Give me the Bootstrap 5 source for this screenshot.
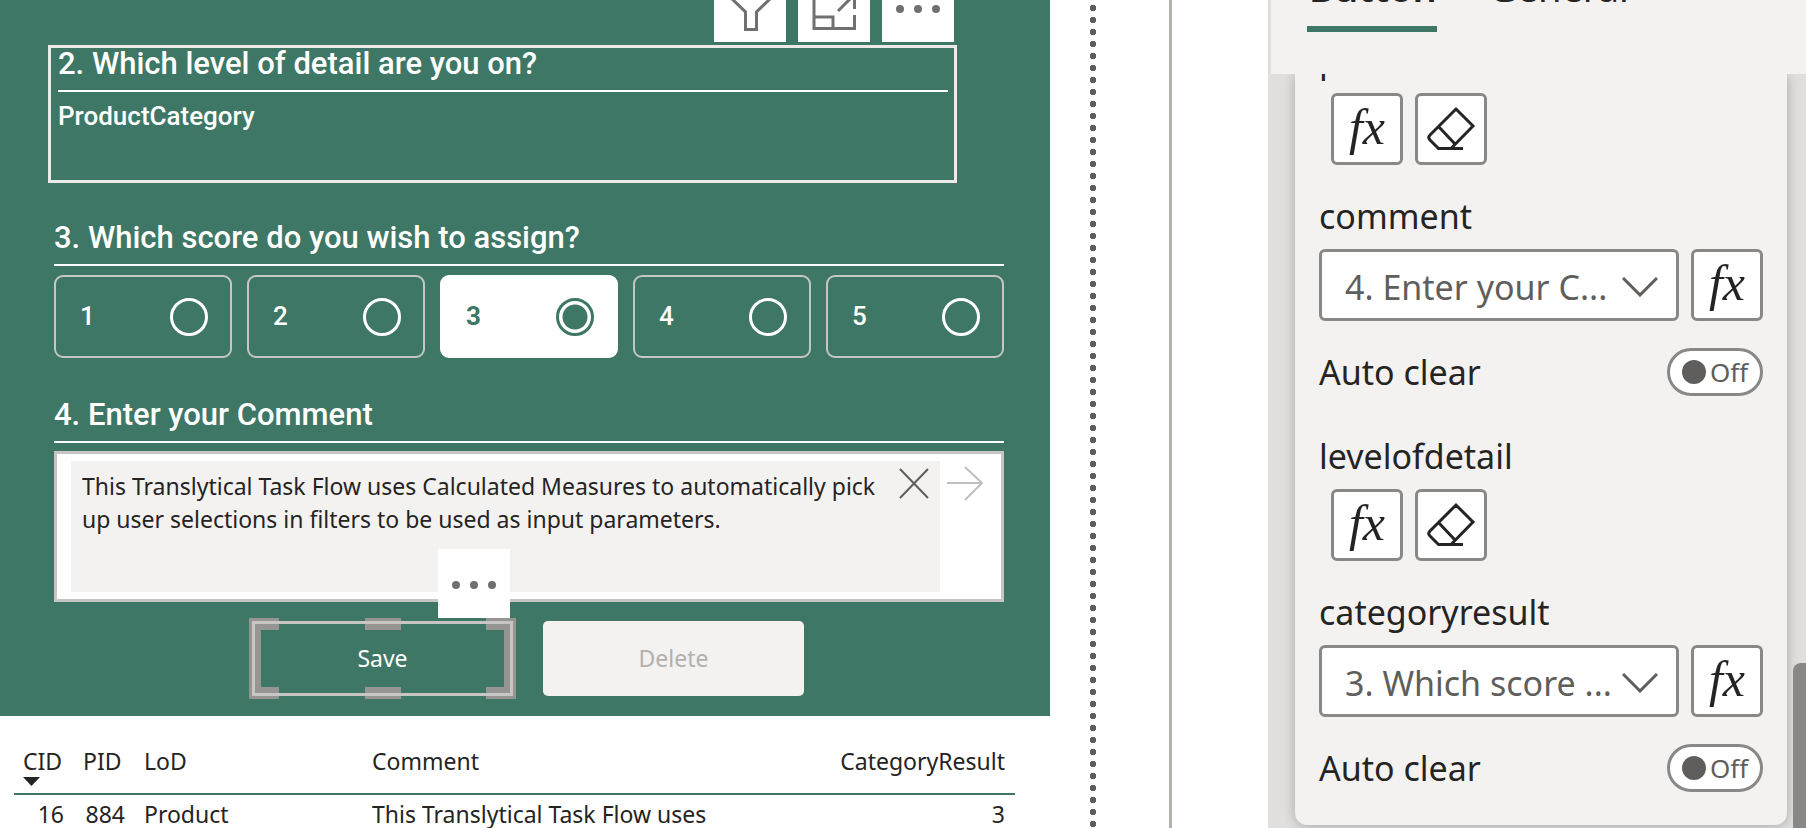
<!DOCTYPE html>
<html lang="en">
<head>
<meta charset="utf-8">
<meta name="viewport" content="width=device-width, initial-scale=1">
<title>Report editor</title>
<link href="https://cdn.jsdelivr.net/npm/bootstrap@5.3.0/dist/css/bootstrap.min.css" rel="stylesheet">
<style>
:root{--brand:#3e7765;--ink:#252423;--soft:#605e5c;--edge:#8a8886;--pale:#f3f2f1;--mid:#c8c6c4}
body{font-family:"Noto Sans","Open Sans",sans-serif;color:var(--ink);font-size:24px;line-height:33px;background:#fff}
button{font:inherit;color:inherit;padding:0;border:0}
svg{display:block}
/* report canvas */
.form-panel{background:var(--brand);color:#fff;font-family:Roboto,sans-serif;height:716px}
.visual-tools{height:42px;gap:12px;margin-right:96px}
.tool{width:72px;height:72px;background:#fff;color:#707070;flex:none}
.level-box{margin:3px 93px 0 48px;border:3px solid #edebe9;height:138px;padding:0 6px 0 7px}
.q-title{font-size:31px;line-height:31px;font-weight:500;margin:0;padding-bottom:11px;border-bottom:2px solid #fff}
.level-value{font-size:26px;line-height:32px;font-weight:500;padding-top:8px}
.question{margin:0 46px 0 54px}
.q-score{margin-top:39px}
.choices{gap:15px;margin-top:9px}
.choice{flex:1 1 0;height:83px;border:2px solid var(--mid);border-radius:9px;padding:0 22px 0 24px;font-size:26px;font-weight:500;cursor:pointer}
.choice input{appearance:none;width:38px;height:38px;border:3px solid #fff;border-radius:50%;margin:0}
.choice.chosen{background:#fff;border-color:#fff;color:var(--brand);font-weight:700}
.choice input:checked{border-color:var(--brand);background:radial-gradient(circle,var(--brand) 12px,#fff 13px)}
.q-comment{margin-top:41px}
.comment-box{margin-top:8px;height:151px;border:3px solid var(--mid);background:#fff;padding:7px 14px}
.comment-field{background:var(--pale);height:131px;flex:1 1 auto;padding:5px 9px 0 11px;margin-right:5px}
.comment-field textarea{flex:1 1 auto;resize:none;border:0;background:none;padding:4px 0 0;height:100px;font:23px/33px "Noto Sans",sans-serif;color:var(--ink);outline:0;overflow:hidden}
.actions{gap:27px;margin-top:16px;margin-left:249px;font-family:"Noto Sans",sans-serif}
.action-btn{height:75px;width:261px;font-size:23px}
.selection{width:267px;height:81px;position:relative}
.selection .frame{position:absolute;inset:0;width:100%;height:100%}
.selection .action-btn{position:absolute;inset:3px;background:none;color:#fff}
.selection .more{position:absolute;right:6px;bottom:100%;height:69px;width:72px;background:#fff;color:#707070}
.delete-btn{background:var(--pale);color:#b3b0ad;border-radius:5px}
.data-table{width:calc(100% - 49px);margin:24px 35px 0 14px;font-size:23px;table-layout:fixed}
.data-table th{font-weight:400;vertical-align:top;height:54px;padding:5px 10px 0 9px;border-bottom:2px solid var(--brand);white-space:nowrap}
.data-table td{padding:3px 10px 0 9px;white-space:nowrap}
.data-table .num{text-align:right}
.sort{width:17px;height:9px;margin-top:-1px}
/* page edges */
.page-dots{width:6px;margin-left:40px;background:radial-gradient(circle at 3px 3px,#605e5c 2px,#605e5c 3px,transparent 3px) 0 5px/6px 12px}
.page-rule{width:3px;margin:0 96px 0 73px;background:#b3b0ad}
/* format pane */
.format-pane{width:538px;flex:none;background:#e1dfdd;border-left:3px solid #e1dfdd;font-size:34px;line-height:48px}
.tab-head{background:var(--pale);height:74px;padding-left:36px;gap:50px;position:relative;z-index:1;font-size:38px}
.tab-link{color:var(--ink);text-decoration:none;height:69px;margin-top:-37px;padding-left:2px}
.tab-link.active{font-weight:600;border-bottom:6px solid var(--brand)}
.settings{display:flow-root;margin:0 19px 3px 24px;height:751px;background:var(--pale);border-radius:0 0 12px 12px;padding:0 24px;box-shadow:0 1px 12px rgba(0,0,0,.25)}
.param{height:396px;padding-top:4px}
.param-first{margin-top:-42px}
.param-name{display:block;height:48px}
.icon-row{gap:12px;padding-left:12px;margin-top:9px}
.mid-name{margin-top:27px}
.pick-row{gap:12px;margin-top:9px}
.clear-row{margin-top:27px}
.sq{width:72px;height:72px;flex:none;background:#fff;border:3px solid var(--edge);border-radius:6px}
.fx-btn{font:italic 50px/60px "Liberation Serif",serif;padding:0 0 4px}
.pick{appearance:none;height:72px;flex:1 1 auto;min-width:0;border:3px solid var(--edge);border-radius:6px;color:var(--soft);font-size:34px;padding:4px 60px 0 23px;background:#fff url("data:image/svg+xml,%3Csvg xmlns='http://www.w3.org/2000/svg' width='36' height='20'%3E%3Cpath d='M1 1L18 18L35 1' fill='none' stroke='%23605e5c' stroke-width='3'/%3E%3C/svg%3E") no-repeat right 18px top 25px}
.switch{width:96px;height:48px;border:3px solid var(--edge);border-radius:24px;background:#fff;color:var(--soft);font-size:26px;line-height:42px;gap:4px;padding-left:12px}
.switch input{appearance:none;width:24px;height:24px;border-radius:50%;background:var(--soft);margin:0;flex:none}
.scroll-thumb{position:absolute;right:0;top:663px;bottom:0;width:13px;background:var(--edge);border-radius:8px 0 0 0}
</style>
</head>
<body class="vh-100 overflow-hidden">
<div class="d-flex h-100 overflow-hidden position-relative">
  <main class="flex-grow-1 overflow-hidden">
    <section class="form-panel">
      <div class="visual-tools d-flex justify-content-end align-items-end overflow-hidden">
        <button class="tool" aria-label="Filters"><svg width="72" height="72" fill="none" stroke="currentColor" stroke-width="3"><path d="M14 25H60L42.500 42V59.500H31.500V42Z"/></svg></button>
        <button class="tool" aria-label="Focus mode"><svg width="72" height="72" fill="none" stroke="currentColor" stroke-width="3"><path d="M30 24H16V58.500H56.500V45M16 47H35V58.500M40 41L56 25M44 24H56.500V39"/></svg></button>
        <button class="tool" aria-label="More options"><svg width="72" height="72" fill="currentColor"><circle cx="18" cy="39" r="4"/><circle cx="36" cy="39" r="4"/><circle cx="54" cy="39" r="4"/></svg></button>
      </div>
      <div class="level-box">
        <h2 class="q-title">2. Which level of detail are you on?</h2>
        <div class="level-value">ProductCategory</div>
      </div>
      <div class="question q-score" role="radiogroup" aria-labelledby="score-title">
        <h2 class="q-title" id="score-title">3. Which score do you wish to assign?</h2>
        <div class="choices d-flex">
          <label class="choice d-flex align-items-center justify-content-between">1<input type="radio" name="score"></label>
          <label class="choice d-flex align-items-center justify-content-between">2<input type="radio" name="score"></label>
          <label class="choice chosen d-flex align-items-center justify-content-between">3<input type="radio" name="score" checked></label>
          <label class="choice d-flex align-items-center justify-content-between">4<input type="radio" name="score"></label>
          <label class="choice d-flex align-items-center justify-content-between">5<input type="radio" name="score"></label>
        </div>
      </div>
      <div class="question q-comment">
        <h2 class="q-title"><label for="note">4. Enter your Comment</label></h2>
        <div class="comment-box d-flex align-items-start">
          <div class="comment-field d-flex align-items-start">
            <textarea id="note">This Translytical Task Flow uses Calculated Measures to automatically pick up user selections in filters to be used as input parameters.</textarea>
            <button class="bg-transparent" aria-label="Clear"><svg width="32" height="34" fill="none" stroke="#605e5c" stroke-width="2"><path d="M1 3L29 32M29 3L1 32"/></svg></button>
          </div>
          <button class="bg-transparent" aria-label="Submit"><svg width="42" height="46" fill="none" stroke="#c0bfbe" stroke-width="2"><path d="M2 22H37M20 6L37 22L20 39"/></svg></button>
        </div>
      </div>
      <div class="actions d-flex align-items-center">
        <div class="selection">
          <svg class="frame" viewBox="0 0 267 81"><path fill="#979593" d="M0 0H30V12H12V69H30V81H0ZM267 0H237V12H255V69H237V81H267ZM116 0H152V12H116ZM116 69H152V81H116Z"/><path fill="none" stroke="#c8c6c4" stroke-width="3" d="M4.500 4.500H262.500V76.500H4.500Z"/></svg>
          <button class="action-btn">Save</button>
          <button class="more" aria-label="More options"><svg width="72" height="69" fill="currentColor"><circle cx="18" cy="36" r="4"/><circle cx="36" cy="36" r="4"/><circle cx="54" cy="36" r="4"/></svg></button>
        </div>
        <button class="action-btn delete-btn">Delete</button>
      </div>
    </section>
    <table class="data-table">
      <colgroup><col style="width:60px"><col style="width:61px"><col style="width:228px"><col><col style="width:190px"></colgroup>
      <thead><tr><th>CID<svg class="sort"><path d="M0 0H17L8.500 9Z" fill="#252423"/></svg></th><th>PID</th><th>LoD</th><th>Comment</th><th class="num">CategoryResult</th></tr></thead>
      <tbody><tr><td class="num">16</td><td class="num">884</td><td>Product</td><td>This Translytical Task Flow uses</td><td class="num">3</td></tr></tbody>
    </table>
  </main>
  <div class="page-dots flex-shrink-0"></div>
  <div class="page-rule flex-shrink-0"></div>
  <aside class="format-pane">
    <nav class="tab-head d-flex align-items-start">
      <a class="tab-link active" href="#">Button</a>
      <a class="tab-link" href="#">General</a>
    </nav>
    <div class="settings">
      <div class="param param-first">
        <span class="param-name">pid</span>
        <div class="icon-row d-flex">
          <button class="sq fx-btn">fx</button>
          <button class="sq" aria-label="Clear value"><svg viewBox="3 3 66 66" fill="none" stroke="#252423" stroke-width="3"><path d="M48 55.500H23.500L15 47Q12.500 44.500 15 42L41 16L58 33L36 55.500M23.500 33.500L40 51"/></svg></button>
        </div>
        <label class="param-name mid-name" for="comment-source">comment</label>
        <div class="d-flex pick-row">
          <select class="pick" id="comment-source"><option>4. Enter your C...</option></select>
          <button class="sq fx-btn">fx</button>
        </div>
        <div class="d-flex justify-content-between clear-row"><label for="clear-a">Auto clear</label><span class="switch d-flex align-items-center"><input type="checkbox" role="switch" id="clear-a">Off</span></div>
      </div>
      <div class="param">
        <span class="param-name">levelofdetail</span>
        <div class="icon-row d-flex">
          <button class="sq fx-btn">fx</button>
          <button class="sq" aria-label="Clear value"><svg viewBox="3 3 66 66" fill="none" stroke="#252423" stroke-width="3"><path d="M48 55.500H23.500L15 47Q12.500 44.500 15 42L41 16L58 33L36 55.500M23.500 33.500L40 51"/></svg></button>
        </div>
        <label class="param-name mid-name" for="result-source">categoryresult</label>
        <div class="d-flex pick-row">
          <select class="pick" id="result-source"><option>3. Which score ...</option></select>
          <button class="sq fx-btn">fx</button>
        </div>
        <div class="d-flex justify-content-between clear-row"><label for="clear-b">Auto clear</label><span class="switch d-flex align-items-center"><input type="checkbox" role="switch" id="clear-b">Off</span></div>
      </div>
    </div>
  </aside>
  <div class="scroll-thumb"></div>
</div>
<script src="https://cdn.jsdelivr.net/npm/bootstrap@5.3.0/dist/js/bootstrap.bundle.min.js"></script>
</body>
</html>
